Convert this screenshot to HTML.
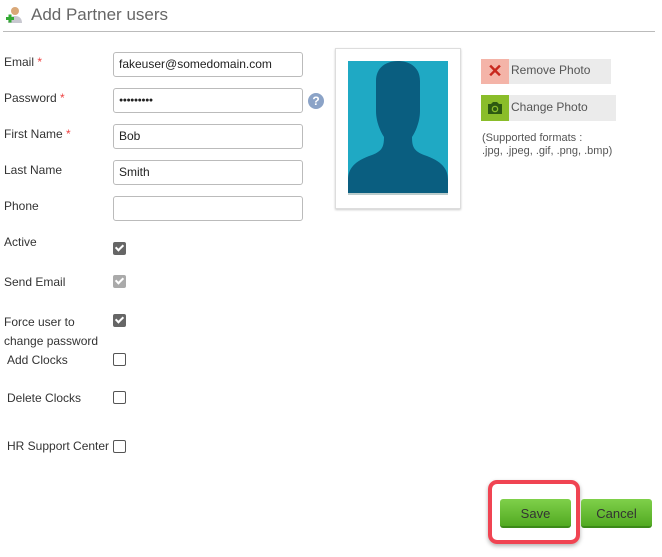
<!DOCTYPE html>
<html><head><style>
body{margin:0;width:662px;height:557px;background:#fff;font-family:"Liberation Sans",sans-serif;position:relative;overflow:hidden}
.a{position:absolute}
.l{position:absolute;left:4px;font-size:12px;color:#333}
.s{color:#e44}
.in{position:absolute;left:113px;width:183px;height:23px;border:1px solid #bbb;border-radius:3px;font-size:12px;line-height:23px;padding-left:5px;box-sizing:content-box;color:#222}
.cb{position:absolute;left:113px;width:11px;height:11px;border:1px solid #555;border-radius:2px;background:#fff}
.ck{background:#666;border-color:#666}
.ck2{background:#aaa;border-color:#aaa}
.ck::after,.ck2::after{content:"";position:absolute;left:3px;top:0px;width:3px;height:6px;border:solid #fff;border-width:0 2px 2px 0;transform:rotate(45deg)}
.btn{position:absolute;top:499px;height:29px;width:71px;border-radius:3px;background:linear-gradient(#7fd04a,#52aa22);border-bottom:2px solid #3c8a18;box-sizing:border-box;font-size:13px;color:#333;text-align:center;line-height:30px}
</style></head><body>
<svg class="a" style="left:5px;top:5px" width="18" height="20" viewBox="0 0 18 20"><circle cx="10" cy="6" r="4" fill="#d9a878"/><path d="M3 18c0-5 3-7 7-7s7 2 7 7z" fill="#c8c8d0"/><rect x="1" y="12" width="8" height="3" fill="#3a3"/><rect x="3.5" y="9.5" width="3" height="8" fill="#3a3"/></svg>
<div class="a" style="left:31px;top:5px;font-size:17px;color:#666">Add Partner users</div>
<div class="a" style="left:3px;top:31px;width:652px;height:1px;background:#bbb"></div>

<div class="l" style="top:55px">Email <span class="s">*</span></div>
<div class="l" style="top:91px">Password <span class="s">*</span></div>
<div class="l" style="top:127px">First Name <span class="s">*</span></div>
<div class="l" style="top:163px">Last Name</div>
<div class="l" style="top:199px">Phone</div>
<div class="in" style="top:52px">fakeuser@somedomain.com</div>
<div class="in" style="top:88px;font-size:7px;letter-spacing:-0.5px">●●●●●●●●●</div>
<div class="in" style="top:124px">Bob</div>
<div class="in" style="top:160px">Smith</div>
<div class="in" style="top:196px"></div>
<div class="a" style="left:308px;top:93px;width:16px;height:16px;border-radius:50%;background:#8ba3c7;color:#fff;font-size:12px;font-weight:bold;text-align:center;line-height:16px">?</div>

<div class="l" style="top:235px">Active</div>
<div class="l" style="top:275px">Send Email</div>
<div class="l" style="top:313px;line-height:19px">Force user to<br>change password</div>
<div class="l" style="top:353px;left:7px">Add Clocks</div>
<div class="l" style="top:391px;left:7px">Delete Clocks</div>
<div class="l" style="top:439px;left:7px">HR Support Center</div>
<div class="cb ck" style="top:242px"></div>
<div class="cb ck2" style="top:275px"></div>
<div class="cb ck" style="top:314px"></div>
<div class="cb" style="top:353px"></div>
<div class="cb" style="top:391px"></div>
<div class="cb" style="top:440px"></div>

<div class="a" style="left:335px;top:48px;width:124px;height:159px;border:1px solid #ddd;box-shadow:0 1px 2px #ccc"></div>
<svg class="a" style="left:348px;top:61px" width="100" height="134" viewBox="0 0 100 134"><rect width="100" height="134" fill="#1fa9c4"/><path d="M28 20c0-15 12-20 22-20s22 5 22 20v30c0 10-4 20-8 26 0 10 2 14 12 18 18 6 24 14 24 25v15H0v-15c0-11 6-19 24-25 10-4 12-8 12-18-4-6-8-16-8-26z" fill="#0a5e80"/><rect y="132" width="100" height="2" fill="#bcc"/></svg>

<div class="a" style="left:481px;top:59px;width:130px;height:25px;background:#ebebeb"></div>
<div class="a" style="left:481px;top:59px;width:28px;height:25px;background:#f4b4a8;color:#c8281e;font-size:18px;font-weight:bold;text-align:center;line-height:25px">✕</div>
<div class="a" style="left:511px;top:63px;font-size:12px;color:#555">Remove Photo</div>
<div class="a" style="left:481px;top:95px;width:135px;height:26px;background:#ebebeb"></div>
<div class="a" style="left:481px;top:95px;width:28px;height:26px;background:#8abd2a"></div>
<svg class="a" style="left:486px;top:100px" width="18" height="16" viewBox="0 0 18 16"><path d="M2 4h3l2-2h4l2 2h3v10H2z" fill="#2d5a12"/><circle cx="9" cy="9" r="3.3" fill="#8abd2a"/><circle cx="9" cy="9" r="2" fill="#2d5a12"/></svg>
<div class="a" style="left:511px;top:100px;font-size:12px;color:#555">Change Photo</div>
<div class="a" style="left:482px;top:132px;font-size:11px;color:#555;line-height:13px">(Supported formats :<br>.jpg, .jpeg, .gif, .png, .bmp)</div>

<div class="a" style="left:488px;top:480px;width:84px;height:56px;border:4px solid #f04452;border-radius:9px;box-shadow:0 2px 4px rgba(0,0,0,.3)"></div>
<div class="btn" style="left:500px">Save</div>
<div class="btn" style="left:581px">Cancel</div>
</body></html>
